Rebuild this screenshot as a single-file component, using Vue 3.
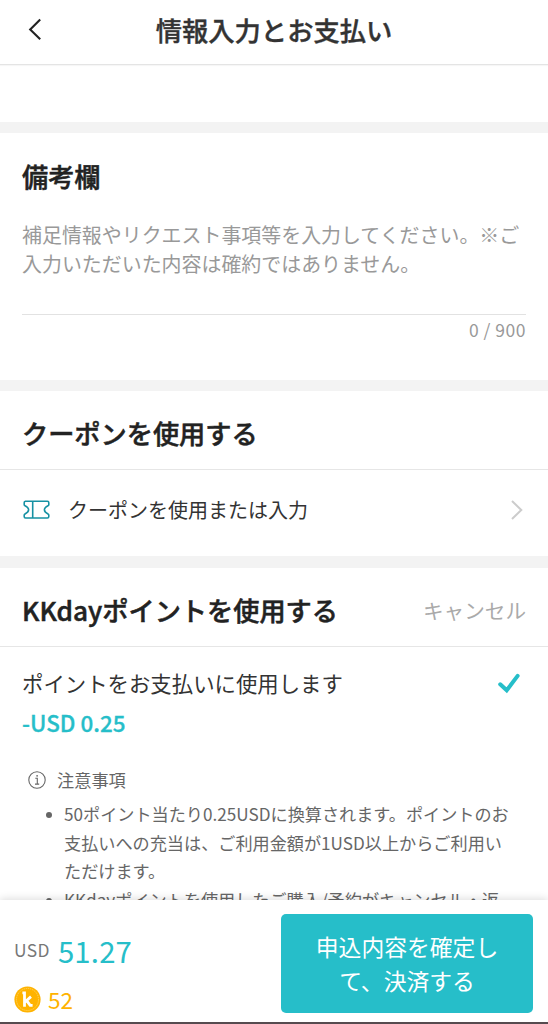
<script setup>
const notes = [
  ['50ポイント当たり0.25USDに換算されます。ポイントのお', '支払いへの充当は、ご利用金額が1USD以上からご利用い', 'ただけます。'],
  ['KKdayポイントを使用したご購入/予約がキャンセル・返'],
]
</script>

<template>
  <div class="page">
    <header class="header">
      <svg class="back" width="16" height="24" viewBox="0 0 16 24"><path d="M14.2 2.5 4.2 12.4 14.2 22.3" fill="none" stroke="#222" stroke-width="2.1" /></svg>
      <h1 class="title">情報入力とお支払い</h1>
    </header>

    <main class="content">
      <div class="spacer"></div>

      <section class="section remarks">
        <h2 class="heading">備考欄</h2>
        <div class="field">補足情報やリクエスト事項等を入力してください。※ご<br />入力いただいた内容は確約ではありません。</div>
        <div class="counter">0 / 900</div>
      </section>

      <section class="section coupon">
        <div class="section-head"><h2 class="heading">クーポンを使用する</h2></div>
        <div class="coupon-row">
          <svg class="ticket" width="28" height="20" viewBox="0 0 28 20" fill="none" stroke="#1691a3" stroke-width="1.6" stroke-linejoin="round">
            <path d="M2.3 1.3H24.4Q25.8 1.3 25.8 2.8V4.7Q25.8 5.3 25 5.7C20.2 8 20.2 11.7 25 14Q25.8 14.4 25.8 15.2V16.6Q25.8 18 24.4 18H2.5Q1.2 18 1.2 16.6V15.2Q1.2 14.4 2 14C6.8 11.7 6.8 8 2 5.7Q1.2 5.3 1.2 4.7V2.8Q1.2 1.3 2.5 1.3ZM9.7 1.3V18" />
          </svg>
          <span class="coupon-label">クーポンを使用または入力</span>
          <svg class="chevron" width="14" height="22" viewBox="0 0 14 22"><path d="M1 2 10.3 11 1 20" fill="none" stroke="#ccc" stroke-width="2" /></svg>
        </div>
      </section>

      <section class="section points">
        <div class="section-head">
          <h2 class="heading">KKdayポイントを使用する</h2>
          <span class="cancel">キャンセル</span>
        </div>
        <div class="points-row">
          <span class="points-label">ポイントをお支払いに使用します</span>
          <svg class="check" width="24" height="22" viewBox="0 0 24 22"><path d="M3.2 11.3 9.7 17.3 20.6 2.9" fill="none" stroke="#26bec9" stroke-width="4" stroke-linecap="round" /></svg>
        </div>
        <div class="discount">-USD 0.25</div>
        <div class="notice">
          <svg width="18" height="18" viewBox="0 0 18 18" fill="none" stroke="#666" stroke-width="1.1"><circle cx="9" cy="9" r="8.2" /><path d="M7.3 7.3H9.3V13M7 13.1H11.2" /><circle cx="9.1" cy="4.8" r=".9" fill="#666" stroke="none" /></svg>
          <span>注意事項</span>
        </div>
        <ul class="notes">
          <li v-for="(note, n) in notes" :key="n">
            <span v-for="line in note" :key="line" class="note-line">{{ line }}</span>
          </li>
        </ul>
      </section>
    </main>

    <footer class="footer">
      <div class="summary">
        <div class="total"><span class="currency">USD</span><span class="amount">51.27</span></div>
        <div class="reward">
          <svg width="27" height="27" viewBox="0 0 27 27">
            <circle cx="13.5" cy="13.5" r="13.1" fill="#ffb300" />
            <circle cx="13.5" cy="13.5" r="11" fill="none" stroke="#ffd873" stroke-width=".8" stroke-dasharray="1.2 .8" />
            <path d="M8.4 6.8H10.5V20.8M17 10.6 11 16M12.8 14.8 16.2 19.4H18.6" fill="none" stroke="#fff" stroke-width="2.8" />
          </svg>
          <span>52</span>
        </div>
      </div>
      <button class="confirm">申込内容を確定し<br />て、決済する</button>
    </footer>
  </div>
</template>

<style>
html,
body {
  background: #fff;
  overflow: hidden;
}
</style>

<style scoped>
.page {
  box-sizing: border-box;
  width: 548px;
  height: 1024px;
  display: flex;
  flex-direction: column;
  overflow: hidden;
  border-bottom: 2px solid #564b4f;
  background: #fff;
  color: #333;
  font-family: "Noto Sans CJK JP", sans-serif;
}
.header {
  flex: none;
  box-sizing: border-box;
  height: 65px;
  display: grid;
  grid-template-columns: 56px 1fr 56px;
  align-items: center;
  padding-bottom: 5px;
  border-bottom: 1px solid #e4e4e4;
  box-shadow: 0 1px 1px #f6f6f6;
}
.back {
  margin-left: 26px;
  margin-top: -1px;
}
.title {
  margin: 0;
  text-align: center;
  font-size: 26.3px;
  font-weight: 500;
  line-height: 36px;
  white-space: nowrap;
  -webkit-text-stroke: 0.4px currentColor;
}
.content {
  flex: 1;
  min-height: 0;
  overflow: hidden;
}
.spacer {
  height: 57px;
}
.section {
  border-top: 11px solid #f3f3f3;
  box-sizing: border-box;
}
.heading {
  margin: 0;
  color: #222;
  font-size: 26.2px;
  font-weight: 500;
  line-height: 36px;
  white-space: nowrap;
  -webkit-text-stroke: 0.5px currentColor;
}
.remarks {
  height: 258px;
  padding: 25px 22px 0;
}
.field {
  box-sizing: border-box;
  height: 121px;
  padding-top: 26px;
  border-bottom: 1px solid #e2e2e2;
  color: #999;
  font-size: 19.95px;
  font-weight: 400;
  line-height: 29px;
  white-space: nowrap;
}
.counter {
  padding-top: 2px;
  color: #999;
  font-size: 17.5px;
  letter-spacing: 0.5px;
  line-height: 26px;
  text-align: right;
}
.coupon {
  height: 176px;
}
.section-head {
  box-sizing: border-box;
  height: 79px;
  display: flex;
  align-items: center;
  justify-content: space-between;
  padding: 6px 22px 0;
  border-bottom: 1px solid #e6e6e6;
}
.points .section-head {
  padding-top: 5px;
}
.coupon-row {
  height: 80px;
  display: flex;
  align-items: center;
  padding: 0 23px;
}
.coupon-label {
  flex: 1;
  margin-left: 17px;
  font-size: 20px;
  line-height: 30px;
}
.points {
  border-top-width: 12px;
}
.cancel {
  color: #aaa;
  font-size: 20.6px;
}
.points-row {
  display: flex;
  align-items: center;
  justify-content: space-between;
  height: 36px;
  padding: 19px 27px 0 22px;
}
.points-label {
  margin-top: -2px;
  font-size: 21.4px;
  line-height: 36px;
}
.discount {
  padding: 2px 22px 0;
  color: #26bec9;
  font-size: 22.4px;
  font-weight: 500;
  line-height: 36px;
  -webkit-text-stroke: 0.3px currentColor;
}
.notice {
  display: flex;
  align-items: center;
  gap: 11px;
  height: 28px;
  padding: 26px 28px 0;
  color: #666;
  font-size: 17.2px;
}
.notice span {
  margin-top: -2px;
}
.notes {
  margin: 6px 0 0;
  padding: 0 0 0 64px;
  color: #666;
  font-size: 17.15px;
  line-height: 28.6px;
}
.note-line {
  display: block;
  white-space: nowrap;
}
.notes li {
  list-style: none;
}
.notes li::before {
  content: "";
  float: left;
  width: 6px;
  height: 6px;
  margin: 12px 0 0 -18px;
  border-radius: 50%;
  background: #666;
}
.footer {
  flex: none;
  box-sizing: border-box;
  height: 122px;
  display: flex;
  justify-content: space-between;
  padding: 14px 15px 9px 14px;
  background: #fff;
  box-shadow: 0 -1px 8px rgba(0, 0, 0, 0.14);
  z-index: 1;
}
.summary {
  padding-top: 15px;
}
.total {
  display: flex;
  align-items: center;
  gap: 8px;
  height: 43px;
  line-height: 43px;
}
.currency {
  margin-top: -2px;
  color: #777;
  font-size: 17.4px;
  letter-spacing: 0.4px;
}
.amount {
  color: #26bec9;
  font-size: 29.3px;
  letter-spacing: 0.2px;
}
.reward {
  display: flex;
  align-items: center;
  gap: 7px;
  height: 27px;
  margin-top: 14px;
  color: #ffb300;
  font-size: 22.6px;
  line-height: 27px;
}
.confirm {
  width: 252px;
  height: 99px;
  padding: 0;
  border: 0;
  border-radius: 5px;
  background: #26bec9;
  color: #fff;
  font: 400 22.8px/34px "Noto Sans CJK JP", sans-serif;
}
</style>
